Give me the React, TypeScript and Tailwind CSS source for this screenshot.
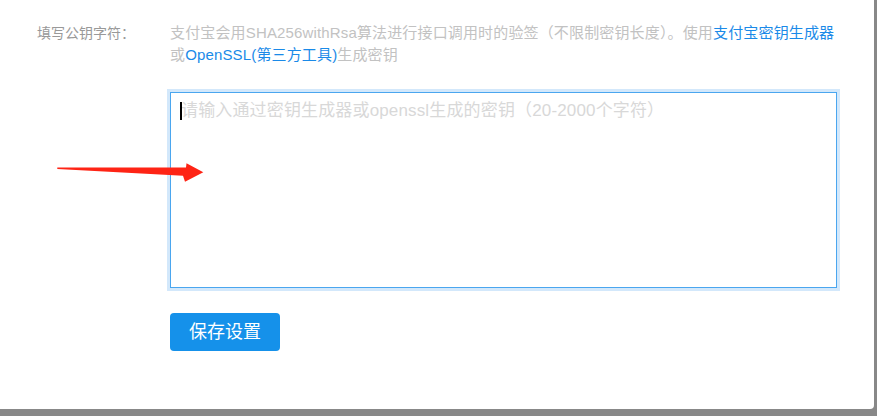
import React from "react";

const font = { fontFamily: '"Liberation Sans", "Noto Sans CJK SC", sans-serif' };

function Arrow() {
  return (
    <svg
      className="absolute left-[50px] top-[155px] w-[160px] h-[35px]"
      viewBox="0 0 160 35"
      fill="none"
    >
      <polygon
        points="7.3,12.5 136,12.6 136.5,8.3 153.3,17.3 135,26.7 133,20.7 7.3,14"
        fill="#fe2415"
      />
    </svg>
  );
}

export default function App() {
  return (
    <div className="w-[877px] h-[416px] bg-[#888888] overflow-hidden" style={font}>
      <div className="relative w-[874px] h-[409px] bg-white rounded-br-[4px] pt-[22px]">
        {/* key description row */}
        <div className="flex">
          <div className="w-[170px] shrink-0 pl-[37px] text-[14px] leading-[22px] text-[#999999]">
            填写公钥字符：
          </div>
          <div className="text-[15px] leading-[22px] tracking-[0.15px] text-[#c2c2c2] whitespace-nowrap">
            支付宝会用SHA256withRsa算法进行接口调用时的验签（不限制密钥长度）。使用
            <a href="#" className="text-[#1a8ae8]">
              支付宝密钥生成器
            </a>
            <br />
            或
            <a href="#" className="text-[#1a8ae8]">
              OpenSSL(第三方工具)
            </a>
            生成密钥
          </div>
        </div>

        {/* textarea */}
        <div className="pl-[170px] mt-[26px]">
          <div className="relative w-[667px] h-[196px]">
            <textarea
              className="block w-full h-full resize-none border border-[#4aa6ef] shadow-[0_0_0_3px_#d3e8fb] outline-none pl-[10px] pr-[10px] pt-[8px] text-[17px] leading-[20px] tracking-[0.15px] text-[#333] placeholder:text-[#d8d8d8]"
              style={font}
              placeholder="请输入通过密钥生成器或openssl生成的密钥（20-2000个字符）"
            />
            <span className="absolute left-[10px] top-[10px] w-[2px] h-[18px] bg-black" />
          </div>
        </div>

        {/* save */}
        <div className="pl-[170px] mt-[25px]">
          <button className="w-[110px] h-[38px] rounded-[4px] bg-[#1591ea] text-white text-[18px] leading-[38px]">
            保存设置
          </button>
        </div>

        <Arrow />
      </div>
    </div>
  );
}
